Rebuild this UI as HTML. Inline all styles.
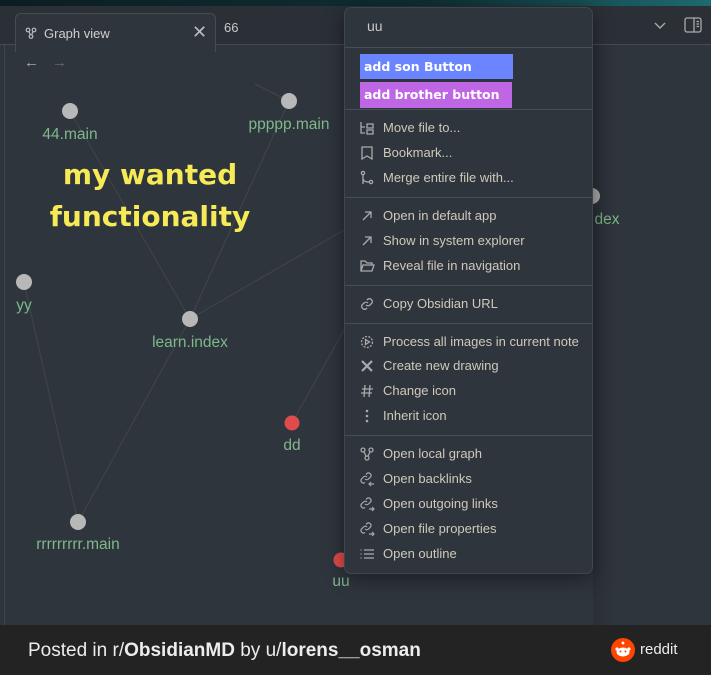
<!DOCTYPE html>
<html><head><meta charset="utf-8"><style>
*{margin:0;padding:0;box-sizing:border-box}
body{width:711px;height:675px;overflow:hidden;background:#2f353d;font-family:"Liberation Sans",sans-serif;position:relative}
.top{position:absolute;left:0;top:0;width:711px;height:7px;background:linear-gradient(90deg,#0b1d22,#0f2f33 60%,#1d6a70)}
.tabbar{position:absolute;left:0;top:6px;width:711px;height:39px;background:#2b3037;border-bottom:1px solid #454b53}
.tab{position:absolute;left:15px;top:7px;width:201px;height:39px;background:#2f353d;border:1px solid #464c53;border-bottom:none;border-radius:6px 6px 0 0;color:#d0d0d0;font-size:13px}
.abs{position:absolute}
.lbl{position:absolute;color:#7fb88a;font-size:15.5px;transform:translateX(-50%);white-space:nowrap}
.node{position:absolute;width:16px;height:16px;border-radius:50%;background:#b8b8b8;transform:translate(-50%,-50%)}
.red{background:#e04b4b;width:15px;height:15px}
.menu{position:absolute;left:344px;top:7px;width:249px;height:567px;background:#2f353c;border:1px solid #40464e;border-radius:7px;box-shadow:0 4px 20px rgba(0,0,0,.45)}
.sep{position:absolute;left:0;width:247px;height:1px;background:#484e56}
.it{position:absolute;left:38px;color:#cfc9bb;font-size:13px;white-space:nowrap}
.ic{position:absolute;left:14px;width:16px;height:16px}
.btn{position:absolute;left:15px;color:#fff;font-family:"DejaVu Sans",sans-serif;font-weight:bold;font-size:12.5px;padding-left:4px;line-height:25px}
.footer{position:absolute;left:0;top:625px;width:711px;height:50px;background:#232323;color:#ececec;font-size:19px}
</style></head><body>
<div class="top"></div>
<div class="tabbar">
 <div class="tab">
  <svg class="abs" style="left:9px;top:13px" width="12" height="12" viewBox="0 0 12 12" fill="none" stroke="#bbb" stroke-width="1.2"><circle cx="3" cy="3" r="1.8"/><circle cx="9" cy="3" r="1.8"/><circle cx="6" cy="9.5" r="1.8"/><path d="M4 4.5L5.4 8M8 4.5L6.6 8"/></svg>
  <span class="abs" style="left:28px;top:12px">Graph view</span>
  <span class="abs" style="left:176px;top:8px;font-size:18px;color:#bbb">✕</span>
 </div>
 <span class="abs" style="left:224px;top:14px;color:#c8c8c8;font-size:13px">66</span>
 <svg class="abs" style="left:654px;top:16px" width="12" height="8" viewBox="0 0 12 8" fill="none" stroke="#aaa" stroke-width="1.4"><path d="M1 1l5 5 5-5"/></svg>
 <svg class="abs" style="left:684px;top:11px" width="18" height="16" viewBox="0 0 18 16" fill="none" stroke="#aaa" stroke-width="1.3"><rect x="1" y="1" width="16" height="14" rx="2"/><path d="M10 1v14M12.5 4.5h2.5M12.5 7h2.5M12.5 9.5h2.5"/></svg>
</div>
<div class="abs" style="left:4px;top:45px;width:1px;height:580px;background:#40464e"></div>
<span class="abs" style="left:24px;top:54px;color:#aaa;font-size:15px">←</span>
<span class="abs" style="left:52px;top:54px;color:#666;font-size:15px">→</span>
<svg class="abs" style="left:0;top:0" width="711" height="625">
 <g stroke="#41464b" stroke-width="1">
 <line x1="70" y1="111" x2="190" y2="319"/><line x1="289" y1="101" x2="190" y2="319"/><line x1="289" y1="101" x2="255" y2="84"/>
 <line x1="190" y1="319" x2="78" y2="522"/><line x1="24" y1="282" x2="78" y2="522"/><line x1="190" y1="319" x2="344" y2="230"/><line x1="292" y1="423" x2="344" y2="330"/>
 </g>
</svg>
<div class="node" style="left:70px;top:111px"></div><div class="lbl" style="left:70px;top:126px">44.main</div>
<div class="node" style="left:289px;top:101px"></div><div class="lbl" style="left:289px;top:116px">ppppp.main</div>
<div class="node" style="left:592px;top:196px"></div><div class="lbl" style="left:607px;top:211px">dex</div>
<div class="node" style="left:24px;top:282px"></div><div class="lbl" style="left:24px;top:297px">yy</div>
<div class="node" style="left:190px;top:319px"></div><div class="lbl" style="left:190px;top:334px">learn.index</div>
<div class="node red" style="left:292px;top:423px"></div><div class="lbl" style="left:292px;top:437px">dd</div>
<div class="node" style="left:78px;top:522px"></div><div class="lbl" style="left:78px;top:536px">rrrrrrrrr.main</div>
<div class="node red" style="left:341px;top:560px"></div><div class="lbl" style="left:341px;top:573px">uu</div>
<div class="abs" style="left:593px;top:45px;width:118px;height:580px;background:linear-gradient(90deg,rgba(0,0,0,.1),rgba(0,0,0,0) 25px)"></div>
<div class="abs" style="left:0;top:154px;width:300px;text-align:center;color:#f7ea57;font-family:'DejaVu Sans',sans-serif;font-weight:bold;font-size:28px;line-height:42px">my wanted<br>functionality</div>

<div class="menu">
 <span class="abs" style="left:22px;top:10px;color:#c8c8c8;font-size:14px">uu</span>
 <div class="sep" style="top:39px"></div>
 <div class="btn" style="top:46px;width:153px;height:25px;background:#6a85ff">add son Button</div>
 <div class="btn" style="top:74px;width:152px;height:26px;background:#bf66e4">add brother button</div>
 <div class="sep" style="top:101px"></div>
 <svg class="ic" style="top:112px" viewBox="0 0 16 16" fill="none" stroke="#aaa" stroke-width="1.3"><path d="M2 2v11h4M2 7h4M8 4h6v4H8zM8 10h6v4H8z"/></svg><span class="it" style="top:112px">Move file to...</span>
 <svg class="ic" style="top:137px" viewBox="0 0 16 16" fill="none" stroke="#aaa" stroke-width="1.3"><path d="M3 2h10v12l-5-3-5 3z"/></svg><span class="it" style="top:137px">Bookmark...</span>
 <svg class="ic" style="top:162px" viewBox="0 0 16 16" fill="none" stroke="#aaa" stroke-width="1.3"><circle cx="4" cy="3" r="1.6"/><circle cx="12" cy="12" r="1.6"/><path d="M4 5v9M4 8c0 4 4 4 6 4"/></svg><span class="it" style="top:162px">Merge entire file with...</span>
 <div class="sep" style="top:189px"></div>
 <svg class="ic" style="top:200px" viewBox="0 0 16 16" fill="none" stroke="#aaa" stroke-width="1.3"><path d="M4 12L12 4M6 4h6v6"/></svg><span class="it" style="top:200px">Open in default app</span>
 <svg class="ic" style="top:225px" viewBox="0 0 16 16" fill="none" stroke="#aaa" stroke-width="1.3"><path d="M4 12L12 4M6 4h6v6"/></svg><span class="it" style="top:225px">Show in system explorer</span>
 <svg class="ic" style="top:250px" viewBox="0 0 16 16" fill="none" stroke="#aaa" stroke-width="1.3"><path d="M2 13V3h4l2 2h5v2M2 13l2-6h11l-2 6z"/></svg><span class="it" style="top:250px">Reveal file in navigation</span>
 <div class="sep" style="top:277px"></div>
 <svg class="ic" style="top:288px" viewBox="0 0 16 16" fill="none" stroke="#aaa" stroke-width="1.3"><path d="M7 9a3 3 0 0 0 4 0l2-2a3 3 0 0 0-4-4l-1 1M9 7a3 3 0 0 0-4 0l-2 2a3 3 0 0 0 4 4l1-1"/></svg><span class="it" style="top:288px">Copy Obsidian URL</span>
 <div class="sep" style="top:315px"></div>
 <svg class="ic" style="top:326px" viewBox="0 0 16 16" fill="none" stroke="#aaa" stroke-width="1.3"><circle cx="8" cy="8" r="5.5" stroke-dasharray="2 1.4"/><path d="M6.5 5.5v5l4-2.5z"/></svg><span class="it" style="top:326px">Process all images in current note</span>
 <svg class="ic" style="top:350px" viewBox="0 0 16 16" fill="none" stroke="#aaa" stroke-width="2.2"><path d="M3 3l10 10M13 3L3 13"/></svg><span class="it" style="top:350px">Create new drawing</span>
 <svg class="ic" style="top:375px" viewBox="0 0 16 16" fill="none" stroke="#aaa" stroke-width="1.3"><path d="M3 6h11M2 10h11M6 2L5 14M11 2l-1 12"/></svg><span class="it" style="top:375px">Change icon</span>
 <svg class="ic" style="top:400px" viewBox="0 0 16 16" fill="#aaa"><circle cx="8" cy="3" r="1.3"/><circle cx="8" cy="8" r="1.3"/><circle cx="8" cy="13" r="1.3"/></svg><span class="it" style="top:400px">Inherit icon</span>
 <div class="sep" style="top:427px"></div>
 <svg class="ic" style="top:438px" viewBox="0 0 16 16" fill="none" stroke="#aaa" stroke-width="1.3"><circle cx="4" cy="4" r="2"/><circle cx="12" cy="4" r="2"/><circle cx="8" cy="12" r="2"/><path d="M5 6l2 4M11 6l-2 4"/></svg><span class="it" style="top:438px">Open local graph</span>
 <svg class="ic" style="top:463px" viewBox="0 0 16 16" fill="none" stroke="#aaa" stroke-width="1.2"><path d="M6 8a2.5 2.5 0 0 0 3.5 0l2-2a2.5 2.5 0 0 0-3.5-3.5l-1 1M8 6a2.5 2.5 0 0 0-3.5 0l-2 2a2.5 2.5 0 0 0 3.5 3.5M10 13h5M12 11l-2 2 2 2"/></svg><span class="it" style="top:463px">Open backlinks</span>
 <svg class="ic" style="top:488px" viewBox="0 0 16 16" fill="none" stroke="#aaa" stroke-width="1.2"><path d="M6 8a2.5 2.5 0 0 0 3.5 0l2-2a2.5 2.5 0 0 0-3.5-3.5l-1 1M8 6a2.5 2.5 0 0 0-3.5 0l-2 2a2.5 2.5 0 0 0 3.5 3.5M10 13h5M13 11l2 2-2 2"/></svg><span class="it" style="top:488px">Open outgoing links</span>
 <svg class="ic" style="top:513px" viewBox="0 0 16 16" fill="none" stroke="#aaa" stroke-width="1.2"><path d="M6 8a2.5 2.5 0 0 0 3.5 0l2-2a2.5 2.5 0 0 0-3.5-3.5l-1 1M8 6a2.5 2.5 0 0 0-3.5 0l-2 2a2.5 2.5 0 0 0 3.5 3.5M10 13h5M13 11l2 2-2 2"/></svg><span class="it" style="top:513px">Open file properties</span>
 <svg class="ic" style="top:538px" viewBox="0 0 16 16" fill="none" stroke="#aaa" stroke-width="1.3"><path d="M5 4h10M5 8h10M5 12h10M1.5 4h1M1.5 8h1M1.5 12h1"/></svg><span class="it" style="top:538px">Open outline</span>
</div>

<div class="footer">
 <span class="abs" style="left:28px;top:15px">Posted in r/<b>ObsidianMD</b> by u/<b>lorens__osman</b></span>
 <div class="abs" style="left:611px;top:13px;width:24px;height:24px;border-radius:50%;background:#ff4500"></div>
 <svg class="abs" style="left:611px;top:13px" width="24" height="24" viewBox="0 0 24 24"><ellipse cx="12" cy="14" rx="6.5" ry="4.5" fill="#fff"/><circle cx="12" cy="5" r="1.4" fill="#fff"/><circle cx="6" cy="11" r="1.6" fill="#fff"/><circle cx="18" cy="11" r="1.6" fill="#fff"/><circle cx="9.5" cy="13.5" r="1" fill="#ff4500"/><circle cx="14.5" cy="13.5" r="1" fill="#ff4500"/></svg>
 <span class="abs" style="left:640px;top:16px;font-size:15px">reddit</span>
</div>
</body></html>
